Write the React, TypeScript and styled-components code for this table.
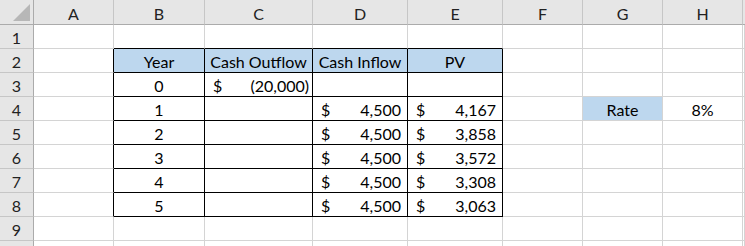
import styled, { createGlobalStyle } from 'styled-components'

const GlobalStyle = createGlobalStyle`
  html, body {
    margin: 0;
    padding: 0;
    background: #fff;
  }
  body {
    font-family: Lato, 'Open Sans', sans-serif;
    font-size: 16px;
    color: #000;
  }
`

const COLS = ['A', 'B', 'C', 'D', 'E', 'F', 'G', 'H']
// the 10th row is only a sliver at the bottom edge, so it gets no label
const ROWS = [1, 2, 3, 4, 5, 6, 7, 8, 9, 10]

type Money = { sign: string; value: string }
type CellData = { text?: string; money?: Money; fill?: boolean }

const money = (value: string): CellData => ({ money: { sign: '$', value } })

// keyed by "B2" style references
const cells: Record<string, CellData> = {
  B2: { text: 'Year', fill: true },
  C2: { text: 'Cash Outflow', fill: true },
  D2: { text: 'Cash Inflow', fill: true },
  E2: { text: 'PV', fill: true },
  B3: { text: '0' },
  C3: money('(20,000)'),
  B4: { text: '1' },
  D4: money('4,500'),
  E4: money('4,167'),
  G4: { text: 'Rate', fill: true },
  H4: { text: '8%' },
  B5: { text: '2' },
  D5: money('4,500'),
  E5: money('3,858'),
  B6: { text: '3' },
  D6: money('4,500'),
  E6: money('3,572'),
  B7: { text: '4' },
  D7: money('4,500'),
  E7: money('3,308'),
  B8: { text: '5' },
  D8: money('4,500'),
  E8: money('3,063'),
}

const inTable = (c: number, r: number) => c >= 1 && c <= 4 && r >= 2 && r <= 8

function App() {
  return (
    <>
      <GlobalStyle />
      <Sheet>
        <Corner>
          <CornerMark />
        </Corner>
        {COLS.map((col) => (
          <ColHead key={col}>{col}</ColHead>
        ))}
        <ColHead $blank />
        {ROWS.map((r) => (
          <Row key={r} r={r} />
        ))}
      </Sheet>
    </>
  )
}

function Row({ r }: { r: number }) {
  return (
    <>
      <RowHead>{r < 10 ? r : ''}</RowHead>
      {COLS.map((col, c) => {
        const data = cells[`${col}${r}`]
        const rightDark = inTable(c, r) || inTable(c + 1, r)
        const bottomDark = inTable(c, r) || inTable(c, r + 1)
        return (
          <Cell key={col} $fill={data?.fill} $rightDark={rightDark} $bottomDark={bottomDark}>
            {data?.text}
            {data?.money && (
              <Accounting $paren={data.money.value.startsWith('(')}>
                <span>{data.money.sign}</span>
                <span>{data.money.value}</span>
              </Accounting>
            )}
          </Cell>
        )
      })}
      <Cell $rightDark={false} $bottomDark={false} />
    </>
  )
}

export default App

const Sheet = styled.div`
  display: grid;
  grid-template-columns: 34px 80px 91px 108px 95px 95px 80px 80px 80px 1fr;
  grid-template-rows: 25px repeat(10, 24px);
  width: 745px;
  height: 246px;
  overflow: hidden;
`

const Corner = styled.div`
  position: relative;
  background: #e6e6e6;
  border-right: 1px solid #ababab;
  border-bottom: 1px solid #ababab;
`

const CornerMark = styled.div`
  position: absolute;
  right: 3px;
  bottom: 3px;
  width: 0;
  height: 0;
  border-left: 17px solid transparent;
  border-bottom: 17px solid #b7b7b7;
`

const ColHead = styled.div<{ $blank?: boolean }>`
  display: flex;
  align-items: center;
  justify-content: center;
  background: #e6e6e6;
  border-right: ${(p) => (p.$blank ? 'none' : '1px solid #c6c6c6')};
  border-bottom: 1px solid #ababab;
  color: #222;
  font-size: 16px;
  padding-top: 2px;
`

const RowHead = styled.div`
  display: flex;
  align-items: center;
  justify-content: center;
  background: #e6e6e6;
  border-right: 1px solid #ababab;
  border-bottom: 1px solid #c6c6c6;
  color: #222;
  font-size: 16px;
  padding-top: 1px;
`

const Cell = styled.div<{ $fill?: boolean; $rightDark: boolean; $bottomDark: boolean }>`
  display: flex;
  align-items: center;
  justify-content: center;
  background: ${(p) => (p.$fill ? '#bdd7ee' : '#fff')};
  border-right: 1px solid ${(p) => (p.$rightDark ? '#000' : '#d4d4d4')};
  border-bottom: 1px solid ${(p) => (p.$bottomDark ? '#000' : '#d4d4d4')};
  min-width: 0;
  overflow: hidden;
  white-space: nowrap;
  font-size: 16px;
  padding-top: 1px;
`

const Accounting = styled.div<{ $paren: boolean }>`
  display: flex;
  justify-content: space-between;
  width: 100%;
  padding: 0 ${(p) => (p.$paren ? '3px' : '6px')} 0 8px;
  box-sizing: border-box;
`
